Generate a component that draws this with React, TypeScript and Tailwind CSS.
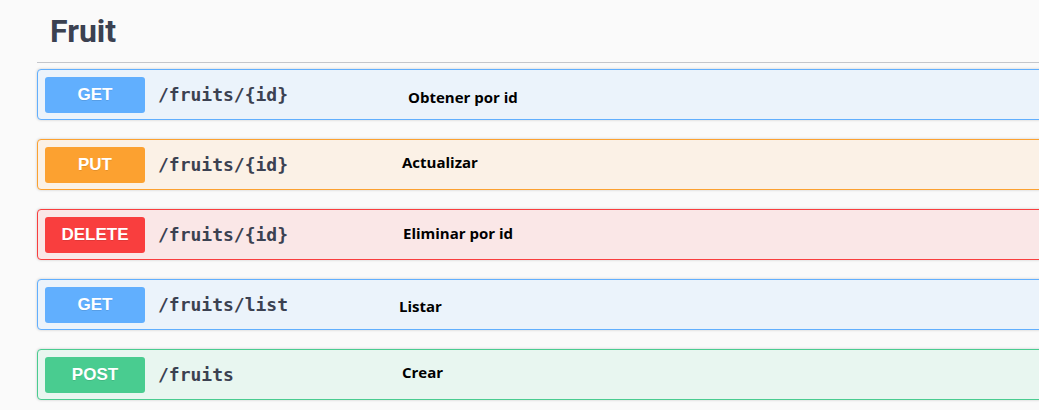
import React from "react";

type Method = "GET" | "PUT" | "DELETE" | "POST";

interface Operation {
  method: Method;
  path: string;
  summary: string;
  // nudges for the summary text, it is not aligned the same in every row
  summaryClass: string;
}

const methodStyles: Record<Method, { row: string; badge: string }> = {
  GET: { row: "border-[#61affe] bg-[#ebf3fb]", badge: "bg-[#61affe]" },
  PUT: { row: "border-[#fca130] bg-[#fbf1e6]", badge: "bg-[#fca130]" },
  DELETE: { row: "border-[#f93e3e] bg-[#fae7e7]", badge: "bg-[#f93e3e]" },
  POST: { row: "border-[#49cc90] bg-[#e8f6f0]", badge: "bg-[#49cc90]" },
};

const operations: Operation[] = [
  { method: "GET", path: "/fruits/{id}", summary: "Obtener por id", summaryClass: "ml-[20px] pt-[17px]" },
  { method: "PUT", path: "/fruits/{id}", summary: "Actualizar", summaryClass: "ml-[14px] pt-[12px]" },
  { method: "DELETE", path: "/fruits/{id}", summary: "Eliminar por id", summaryClass: "ml-[15px] pt-[13px]" },
  { method: "GET", path: "/fruits/list", summary: "Listar", summaryClass: "ml-[11px] pt-[16px]" },
  { method: "POST", path: "/fruits", summary: "Crear", summaryClass: "ml-[14px] pt-[12px]" },
];

function OperationRow({ op }: { op: Operation }) {
  const styles = methodStyles[op.method];
  return (
    <div
      className={`flex h-[51px] items-center rounded-[4px] border pl-[7px] shadow-[0_0_3px_rgba(0,0,0,0.19)] ${styles.row}`}
    >
      <span
        className={`flex h-[36px] w-[100px] shrink-0 items-center justify-center rounded-[3px] text-[17px] font-bold text-white [font-family:'Liberation_Sans',Arial,sans-serif] [text-shadow:0_1px_0_rgba(0,0,0,0.1)] ${styles.badge}`}
      >
        {op.method}
      </span>
      <span className="ml-[13px] w-[230px] shrink-0 text-[18px] font-semibold text-[#3b4151] [font-family:'DejaVu_Sans_Mono',monospace]">
        {op.path}
      </span>
      <span
        className={`self-start text-[15px] leading-[20px] font-bold text-black [font-family:'Open_Sans',sans-serif] ${op.summaryClass}`}
      >
        {op.summary}
      </span>
    </div>
  );
}

export default function App() {
  return (
    <div className="h-[410px] w-full overflow-hidden bg-[#fafafa]">
      <div className="-mr-[12px] ml-[37px]">
        <div className="border-b border-[#c4c6cb] pt-[15px] pb-[15px] pl-[13px]">
          <h2 className="text-[32px] leading-[32px] font-bold text-[#3b4151] [font-family:Roboto,sans-serif]">
            Fruit
          </h2>
        </div>
        <div className="mt-[6px] flex flex-col gap-[19px]">
          {operations.map((op, i) => (
            <OperationRow key={i} op={op} />
          ))}
        </div>
      </div>
    </div>
  );
}
